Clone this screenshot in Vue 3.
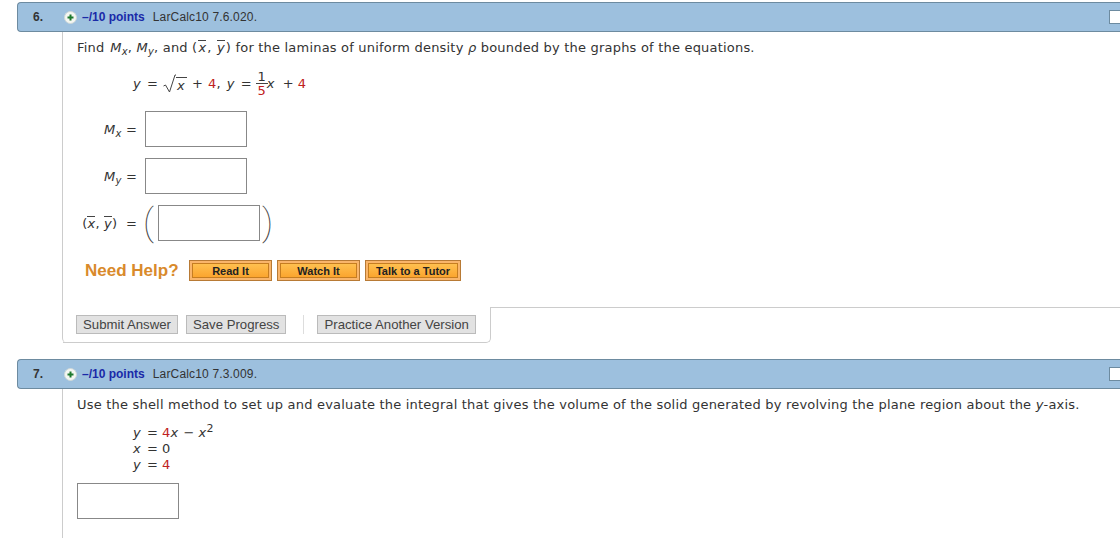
<script setup>
const questions = {
  six: { num: '6.', ref: 'LarCalc10 7.6.020.' },
  seven: { num: '7.', ref: 'LarCalc10 7.3.009.' }
}
</script>

<template>
  <div class="page">
    <section class="question">
      <header class="q-head">
        <span class="q-num">{{ questions.six.num }}</span>
        <span class="plus"><svg width="13" height="13" viewBox="0 0 13 13"><circle cx="6.5" cy="6.5" r="6" fill="#f4f6f2" stroke="#cfd8d8" /><path d="M6.5 3.5v6M3.5 6.5h6" stroke="#1e7a2e" stroke-width="2" /></svg></span>
        <span class="points">–/10 points</span>
        <span class="ref">{{ questions.six.ref }}</span>
        <span class="corner"></span>
      </header>
      <div class="q-body">
        <p class="prompt">Find <i class="first">M<sub>x</sub></i>, <i>M<sub>y</sub></i>, and (<i class="bar">x</i>, <i class="bar">y</i>) for the laminas of uniform density <i>ρ</i> bounded by the graphs of the equations.</p>
        <div class="equation">
          <i>y</i>
          <span class="op">=</span>
          <span class="sqrt"><svg width="13" height="19" viewBox="0 0 13 19"><path d="M0.5 12l2-1 4 7L12 1h1" fill="none" stroke="#444" stroke-width="1" /></svg><i class="radicand">x</i></span>
          <span class="op plus-sign">+</span>
          <span class="red">4</span>
          <span>,</span>
          <i class="next-y">y</i>
          <span class="op before-frac">=</span>
          <span class="frac"><span class="top">1</span><span class="red">5</span></span>
          <i class="after-frac">x</i>
          <span class="op last-plus">+</span>
          <span class="red">4</span>
        </div>

        <div class="answer-row">
          <span class="label"><i>M<sub>x</sub></i>&nbsp;=</span>
          <span class="box"></span>
        </div>
        <div class="answer-row">
          <span class="label"><i>M<sub>y</sub></i>&nbsp;=</span>
          <span class="box"></span>
        </div>
        <div class="answer-row">
          <span class="label">(<i class="bar">x</i>, <i class="bar">y</i>)&nbsp; =</span>
          <span class="paren">(</span>
          <span class="box"></span>
          <span class="paren">)</span>
        </div>

        <div class="help">
          <span class="help-title">Need Help?</span>
          <span class="help-btn read"><b>Read It</b></span>
          <span class="help-btn watch"><b>Watch It</b></span>
          <span class="help-btn tutor"><b>Talk to a Tutor</b></span>
        </div>

        <div class="footer">
          <div class="actions">
            <button class="gray">Submit Answer</button>
            <button class="gray">Save Progress</button>
            <span class="sep"></span>
            <button class="gray">Practice Another Version</button>
          </div>
          <div class="tail"></div>
        </div>
      </div>
    </section>

    <section class="question second">
      <header class="q-head">
        <span class="q-num">{{ questions.seven.num }}</span>
        <span class="plus"><svg width="13" height="13" viewBox="0 0 13 13"><circle cx="6.5" cy="6.5" r="6" fill="#f4f6f2" stroke="#cfd8d8" /><path d="M6.5 3.5v6M3.5 6.5h6" stroke="#1e7a2e" stroke-width="2" /></svg></span>
        <span class="points">–/10 points</span>
        <span class="ref">{{ questions.seven.ref }}</span>
        <span class="corner"></span>
      </header>
      <div class="q-body open">
        <p class="prompt">Use the shell method to set up and evaluate the integral that gives the volume of the solid generated by revolving the plane region about the <i>y</i>-axis.</p>
        <div class="lines">
          <div><i>y</i><span class="op">=</span><span class="red">4</span><i>x</i><span class="op minus">−</span><i>x</i><sup>2</sup></div>
          <div><i>x</i><span class="op">=</span>0</div>
          <div><i>y</i><span class="op">=</span><span class="red">4</span></div>
        </div>
        <span class="box"></span>
      </div>
    </section>
  </div>
</template>

<style>
html, body {
  margin: 0;
  background: #fff;
  overflow: hidden;
}
</style>

<style scoped>
.page {
  width: 1120px;
  height: 538px;
  overflow: hidden;
  padding: 2px 0 0 17px;
  box-sizing: border-box;
  font-family: "DejaVu Sans", Verdana, sans-serif;
  font-size: 13px;
  color: #333;
}

.second {
  margin-top: 16px;
}

.q-head {
  display: flex;
  align-items: center;
  height: 30px;
  box-sizing: border-box;
  background: #9dc0de;
  border: 1px solid #6d8ba0;
  border-right: none;
  border-radius: 4px 0 0 4px;
  font-family: "Liberation Sans", Arial, sans-serif;
  font-size: 12px;
}

.q-num {
  width: 46px;
  padding-left: 15px;
  box-sizing: border-box;
  font-weight: bold;
  color: #333;
}

.plus {
  display: flex;
  width: 18px;
}

.points {
  font-weight: bold;
  color: #1a2aa8;
  margin-right: 8px;
}

.ref {
  color: #333;
  letter-spacing: 0.17px;
}

.corner {
  width: 11px;
  height: 14px;
  margin-left: auto;
  background: #fff;
  border: 1px solid #6d8ba0;
  border-right: none;
  box-sizing: border-box;
}

.q-body {
  margin-left: 45px;
  border-left: 1px solid #ccc;
  border-bottom-left-radius: 5px;
  padding-left: 14px;
  letter-spacing: 0.2px;
}

.prompt {
  margin: 0;
  padding-top: 8px;
  line-height: 16px;
  white-space: nowrap;
}

.prompt .first {
  margin-left: 1.5px;
}

.prompt .bar {
  margin: 0 1px;
}

sub {
  font-size: 10px;
  line-height: 0;
  vertical-align: -3px;
}

sup {
  font-size: 11px;
  line-height: 0;
}

.bar {
  position: relative;
}

.bar::before {
  content: "";
  position: absolute;
  left: 0;
  right: 0;
  top: 0;
  border-top: 1px solid #444;
}

.red {
  color: #c02020;
}

.equation {
  display: flex;
  align-items: center;
  height: 40px;
  margin-top: 7px;
  padding-left: 56px;
  white-space: nowrap;
}

.op {
  margin: 0 4px 0 6px;
}

.equation > .op {
  margin-right: 5px;
}

.equation > .plus-sign {
  margin: 0 5px 0 7px;
}

.next-y {
  margin-left: 6px;
}

.equation > .before-frac {
  margin-right: 4px;
}

.after-frac {
  margin-left: -1px;
}

.equation > .last-plus {
  margin: 0 4px 0 8px;
}

.minus {
  margin: 0 4px 0 5px;
}

.sqrt {
  display: inline-flex;
  align-items: flex-end;
  margin-right: -2px;
}

.radicand {
  border-top: 1px solid #444;
  padding: 0 2px 0 1px;
  line-height: 15px;
}

.frac {
  display: inline-flex;
  flex-direction: column;
  align-items: center;
  width: 12px;
  line-height: 13px;
}

.frac .top {
  border-bottom: 1px solid #444;
  width: 100%;
  text-align: center;
}

.answer-row {
  display: flex;
  align-items: center;
  height: 36px;
  margin-bottom: 11px;
}

.equation + .answer-row {
  margin-top: 8px;
}

.label {
  width: 66px;
  text-align: right;
  white-space: nowrap;
  box-sizing: border-box;
  flex: none;
  margin-left: -6px;
}

.answer-row .label + .box {
  margin-left: 8px;
}

.answer-row .label + .paren {
  margin-left: 6px;
}

.box {
  display: block;
  flex: none;
  width: 102px;
  height: 36px;
  box-sizing: border-box;
  background: #fff;
  border: 1px solid #888;
}

.paren {
  width: 9px;
  font-family: Roboto, "Liberation Sans", sans-serif;
  font-size: 37px;
  font-weight: 100;
  line-height: 36px;
  color: #444;
}

.paren + .box {
  margin-left: 6px;
}

.box + .paren {
  margin-left: 2px;
}

.help {
  display: flex;
  align-items: center;
  height: 21px;
  margin-top: 19px;
  padding-left: 8px;
  font-family: "Liberation Sans", Arial, sans-serif;
  letter-spacing: 0;
}

.help-title {
  width: 104px;
  font-size: 17px;
  font-weight: bold;
  color: #d98a2b;
  flex: none;
}

.help-btn {
  display: flex;
  height: 21px;
  box-sizing: border-box;
  margin-right: 5px;
  padding: 2px;
  background: #f9b56b;
  border: 1px solid #b87a35;
}

.help-btn b {
  flex: 1;
  display: flex;
  align-items: center;
  justify-content: center;
  background: linear-gradient(#ffc050, #fba52e);
  border: 1px solid #c67d20;
  font-size: 11px;
  color: #222;
}

.read { width: 83px; }
.watch { width: 83px; }
.tutor { width: 96px; }

.footer {
  display: flex;
  margin-top: 26px;
  margin-left: -14px;
}

.actions {
  display: flex;
  align-items: flex-start;
  width: 428px;
  height: 36px;
  box-sizing: border-box;
  padding: 8px 0 0 13px;
  border-right: 1px solid #ccc;
  border-bottom: 1px solid #ccc;
  border-radius: 0 0 5px 0;
}

.tail {
  flex: 1;
  border-top: 1px solid #ccc;
}

.gray {
  height: 19px;
  padding: 0 6px;
  margin: 0 8px 0 0;
  box-sizing: border-box;
  background: #e2e2e2;
  border: 1px solid #bbb;
  border-radius: 0;
  font-family: "Liberation Sans", Arial, sans-serif;
  font-size: 13.2px;
  line-height: 17px;
  color: #444;
  white-space: nowrap;
}

.sep {
  width: 1px;
  height: 19px;
  background: #ddd;
  margin: 0 13px 0 9px;
}

.open {
  height: 200px;
}

.lines {
  padding-left: 56px;
  margin-top: 12px;
  line-height: 16px;
  white-space: nowrap;
}

.open > .box {
  margin-top: 10px;
}
</style>
